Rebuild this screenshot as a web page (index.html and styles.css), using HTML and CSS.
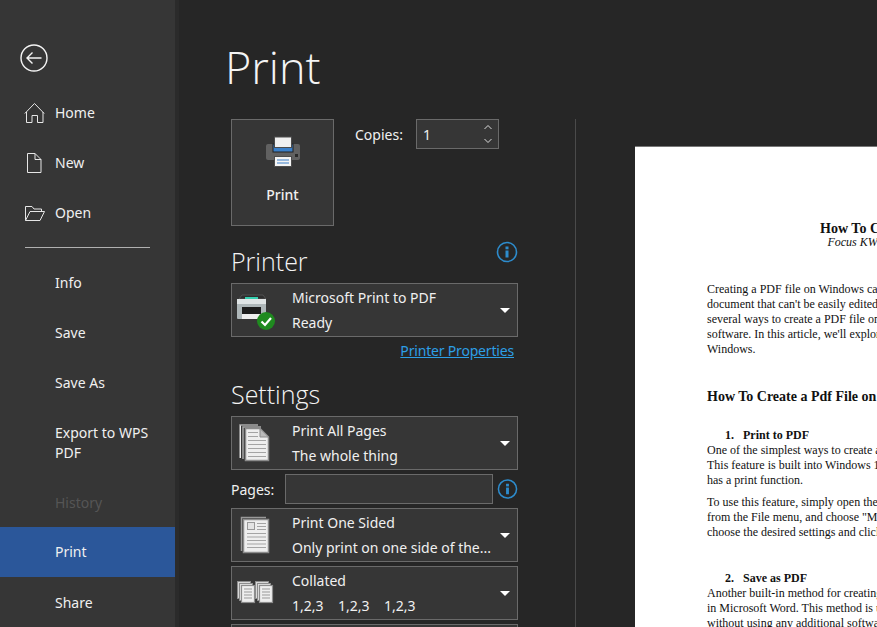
FILE: index.html
```html
<!DOCTYPE html>
<html lang="en">
<head>
<meta charset="utf-8">
<title>Print</title>
<link rel="stylesheet" href="styles.css">
</head>
<body>
<div class="app">
  <nav class="side">
    <div class="back">
      <svg width="28" height="28" viewBox="0 0 28 28" fill="none" stroke="#f4f4f4" stroke-width="1.400"><circle cx="14" cy="14" r="13"/><path d="M21.500 14H7M12.500 8.500 7 14l5.500 5.500"/></svg>
    </div>
    <a class="item"><span class="ico"><svg width="22" height="22" viewBox="0 0 22 22" fill="none" stroke="#e6e6e6" stroke-width="1"><path d="M.8 11.500 10.500 1.500l9.700 10M2.500 10v10.500h5.500v-7h5.500v7H19V10"/></svg></span>Home</a>
    <a class="item"><span class="ico"><svg width="22" height="22" viewBox="0 0 22 22" fill="none" stroke="#e6e6e6" stroke-width="1"><path d="M3.500 1.500v19h13.500V7.500l-6-6zM11 1.500v6h6"/></svg></span>New</a>
    <a class="item"><span class="ico"><svg width="22" height="22" viewBox="0 0 22 22" fill="none" stroke="#e6e6e6" stroke-width="1"><path d="M1.500 18.500V4.500h6.500l2 2.500h7.500v2.500M1.500 18.500h14.500l4.500-9H6z"/></svg></span>Open</a>
    <div class="sep"></div>
    <a class="item">Info</a>
    <a class="item">Save</a>
    <a class="item">Save As</a>
    <a class="item tall">Export to WPS<br>PDF</a>
    <a class="item off">History</a>
    <a class="item on">Print</a>
    <a class="item last">Share</a>
  </nav>
  <main class="main">
    <h1 class="title">Print</h1>
    <div class="cols">
      <section class="panel">
        <div class="top">
          <button class="bigbtn">
            <svg width="36" height="32" viewBox="0 0 36 32"><rect x="1" y="8" width="34" height="16" rx="2" fill="#616161"/><rect x="8" y="8" width="20" height="8" fill="#3a7fc8" stroke="#222" stroke-width="1"/><rect x="9.500" y="1" width="17" height="10.500" fill="#f0f0f0" stroke="#4c4c4c"/><rect x="30" y="18" width="3" height="3" fill="#2a2a2a"/><rect x="9.500" y="20.500" width="17" height="10" fill="#f4f4f4" stroke="#4c4c4c"/><path d="M12 24h12M12 27h12" stroke="#3a7fc8"/></svg>
            <span>Print</span>
          </button>
          <label class="copies">Copies:</label>
          <div class="spin"><span>1</span>
            <svg width="10" height="20" viewBox="0 0 10 20" fill="none" stroke="#dcdcdc"><path d="M1.500 5 5 1.500 8.500 5M1.500 15 5 18.500 8.500 15"/></svg>
          </div>
        </div>
        <div class="headrow">
          <h2>Printer</h2>
          <svg class="info" width="22" height="22" viewBox="0 0 22 22"><circle cx="11" cy="11" r="9.500" fill="none" stroke="#2d8ccd" stroke-width="1.600"/><rect x="9.500" y="9.500" width="3" height="7" fill="#2d8ccd"/><rect x="9.500" y="5.500" width="3" height="2.800" fill="#2d8ccd"/></svg>
        </div>
        <div class="drop">
          <svg class="dico" width="50" height="50" viewBox="0 0 50 50"><path d="M7 14 10 10h21l3 4z" fill="#2e2e2e" stroke="#666" stroke-width=".6"/><rect x="13" y="12" width="13" height="2" fill="#35d0b0"/><rect x="5" y="14" width="29" height="20" rx="1" fill="#aeb7b9"/><rect x="5" y="14" width="29" height="5" fill="#dfe4e5"/><rect x="10" y="22" width="19" height="7" fill="#1d1d1d"/><rect x="10" y="29" width="19" height="5" fill="#eeeeee"/><circle cx="34" cy="36" r="9" fill="#1f8a1f"/><path d="M29.500 36.500 33 40l6-7" fill="none" stroke="#fff" stroke-width="2.200"/></svg>
          <div class="dtxt"><span>Microsoft Print to PDF</span><span>Ready</span></div>
          <i class="arrow"></i>
        </div>
        <a class="link">Printer Properties</a>
        <h2 class="settings">Settings</h2>
        <div class="drop">
          <svg class="dico" width="50" height="50" viewBox="0 0 50 50"><path d="M8 40V7h18M11 41V9h18" fill="none" stroke="#a8a8a8" stroke-width="1.500"/><path d="M8.500 40V7.500" stroke="#eee" stroke-width="1"/><path d="M13.500 10.500H28l8.500 8.500v23.500h-23z" fill="#eee" stroke="#8c8c8c" stroke-width="1.500"/><path d="M28 10.500V19h8.500z" fill="#bbb" stroke="#8c8c8c"/><path d="M16 14.500h10M16 18.500h10M16 22.500h18M16 26.500h18M16 30.500h18M16 34.500h18M16 38.500h18" stroke="#a4a4a4" stroke-width="1.200"/></svg>
          <div class="dtxt"><span>Print All Pages</span><span>The whole thing</span></div>
          <i class="arrow"></i>
        </div>
        <div class="pages">
          <label>Pages:</label>
          <div class="pinput"></div>
          <svg width="22" height="22" viewBox="0 0 22 22"><circle cx="11" cy="11" r="9.500" fill="none" stroke="#2d8ccd" stroke-width="1.600"/><rect x="9.500" y="9.500" width="3" height="7" fill="#2d8ccd"/><rect x="9.500" y="5.500" width="3" height="2.800" fill="#2d8ccd"/></svg>
        </div>
        <div class="drop">
          <svg class="dico" width="50" height="50" viewBox="0 0 50 50"><path d="M9.500 41V7.500H34" fill="none" stroke="#999" stroke-width="1.500"/><rect x="11.500" y="9.500" width="25" height="33" fill="#eee" stroke="#8c8c8c" stroke-width="1.500"/><rect x="15.500" y="12.500" width="7" height="7" fill="#e4e4e4" stroke="#999"/><path d="M25 13.500h9M25 16.500h9M25 19.500h9M15 23.500h19M15 27h19M15 30.500h19M15 34h19M15 37.500h19" stroke="#a4a4a4" stroke-width="1.200"/></svg>
          <div class="dtxt"><span>Print One Sided</span><span>Only print on one side of the...</span></div>
          <i class="arrow"></i>
        </div>
        <div class="drop">
          <svg class="dico" width="50" height="50" viewBox="0 0 50 50"><rect x="5.500" y="13.500" width="13" height="17" fill="#d8d8d8" stroke="#8c8c8c"/><rect x="7.500" y="15.500" width="13" height="17" fill="#e0e0e0" stroke="#8c8c8c"/><rect x="9.500" y="17.500" width="13" height="17" fill="#eee" stroke="#8c8c8c" stroke-width="1.200"/><path d="M12 21h8M12 24h8M12 27h8M12 30h8" stroke="#999"/><rect x="23.500" y="13.500" width="13" height="17" fill="#d8d8d8" stroke="#8c8c8c"/><rect x="25.500" y="15.500" width="13" height="17" fill="#e0e0e0" stroke="#8c8c8c"/><rect x="27.500" y="17.500" width="13" height="17" fill="#eee" stroke="#8c8c8c" stroke-width="1.200"/><path d="M30 21h8M30 24h8M30 27h8M30 30h8" stroke="#999"/></svg>
          <div class="dtxt"><span>Collated</span><span class="nums"><b>1,2,3</b><b>1,2,3</b><b>1,2,3</b></span></div>
          <i class="arrow"></i>
        </div>
        <div class="drop"></div>
      </section>
      <div class="rule"></div>
      <section class="sheet">
        <h3 class="dt">How To Create a Pdf File on Windows 10</h3>
        <p class="kw">Focus KW: how to create a pdf file on windows</p>
        <p class="para intro">Creating a PDF file on Windows can be a useful way to share a<br>document that can't be easily edited or changed. There are<br>several ways to create a PDF file on Windows, with or without<br>software. In this article, we'll explore the options available on<br>Windows.</p>
        <h4 class="dh">How To Create a Pdf File on Windows</h4>
        <h5 class="li"><span>1.</span>Print to PDF</h5>
        <p class="para">One of the simplest ways to create a PDF is the Print to PDF tool.<br>This feature is built into Windows 10 and works in any app that<br>has a print function.</p>
        <p class="para second">To use this feature, simply open the document, select Print<br>from the File menu, and choose "Microsoft Print to PDF", then<br>choose the desired settings and click Print.</p>
        <h5 class="li two"><span>2.</span>Save as PDF</h5>
        <p class="para">Another built-in method for creating a PDF is the Save As option<br>in Microsoft Word. This method is useful for saving documents<br>without using any additional software at all on your computer.</p>
      </section>
    </div>
  </main>
</div>
</body>
</html>
```
FILE: styles.css
```css
* { box-sizing: border-box; }
html, body { margin: 0; height: 100%; overflow: hidden; }
body { background: #262626; color: #f0f0f0; font-family: "Noto Sans", "Open Sans", sans-serif; font-size: 14px; }
.app { display: flex; height: 627px; overflow: hidden; }

.side { width: 175px; flex: none; background: #363636; box-shadow: 4px 0 0 #2b2b2b; }
.back { height: 88px; padding: 44px 0 0 20px; }
.back svg { display: block; }
.item { display: flex; align-items: center; height: 50px; padding: 0 0 2px 55px; position: relative; color: #f0f0f0; }
.item.tall { height: 70px; display: block; padding-top: 15px; line-height: 20px; }
.item.off { color: #555; height: 49px; padding-bottom: 0; }
.item.on { background: #2b579a; }
.item.last { padding-bottom: 0; }
.ico { position: absolute; left: 24px; top: 14px; width: 22px; height: 22px; }
.ico svg { display: block; }
.sep { height: 1px; background: #b0b0b0; margin: 9px 25px 10px; }

.main { flex: 1; min-width: 0; padding-left: 50px; }
.title { margin: 0; height: 119px; padding-top: 37px; font-size: 45px; line-height: 60px; font-weight: 300; color: #f4f4f4; font-family: "Open Sans", sans-serif; }
.cols { display: flex; margin-left: 6px; }
.panel { width: 287px; flex: none; }
.top { display: flex; align-items: flex-start; height: 119px; }
.bigbtn { width: 103px; height: 107px; background: #363636; border: 1px solid #6a6a6a; color: #f0f0f0; font: inherit; display: flex; flex-direction: column; align-items: center; padding: 16px 0 0; }
.bigbtn svg { display: block; margin-bottom: 17px; }
.bigbtn span { font-weight: 500; line-height: 20px; }
.copies { margin: 6px 11px 0 21px; line-height: 20px; width: 50px; }
.spin { width: 83px; height: 30px; background: #363636; border: 1px solid #6a6a6a; display: flex; justify-content: space-between; align-items: center; padding: 0 5px 0 6px; }
h2 { margin: 0; font-size: 25px; font-weight: 300; line-height: 32px; color: #f4f4f4; font-family: "Open Sans", sans-serif; }
.headrow { display: flex; justify-content: space-between; height: 45px; }
.headrow h2 { padding-top: 7px; }
.headrow .info { margin-top: 3px; }
.drop { height: 54px; background: #363636; border: 1px solid #6a6a6a; display: flex; align-items: center; margin-bottom: 4px; padding-right: 7px; }
.dico { flex: none; margin: 0 10px 0 0; display: block; }
.dtxt { flex: 1; min-width: 0; display: flex; flex-direction: column; gap: 5px; line-height: 20px; white-space: nowrap; }
.arrow { width: 0; height: 0; border-left: 5px solid transparent; border-right: 5px solid transparent; border-top: 5px solid #fff; flex: none; }
.nums b { font-weight: 400; display: inline-block; width: 46px; }
.link { display: block; text-align: right; padding-right: 4px; color: #2d9fe6; text-decoration: underline; line-height: 20px; letter-spacing: -.18px; }
.settings { margin-top: 17px; height: 38px; line-height: 32px; }
.pages { display: flex; align-items: center; height: 30px; margin-bottom: 4px; }
.pages label { width: 54px; flex: none; }
.pinput { width: 208px; height: 30px; background: #363636; border: 1px solid #6a6a6a; margin-right: 4px; flex: none; }
.pages svg { display: block; }
.rule { width: 1px; background: #4a4a4a; margin-left: 57px; height: 600px; flex: none; }
.sheet { width: 612px; flex: none; height: 792px; margin: 27px 0 0 59px; background: #fff; border-top: 1px solid #777; color: #111; font-family: "Liberation Serif", serif; font-size: 12px; line-height: 15px; padding: 75px 72px 0; }
.dt { margin: 0; padding-left: 4px; text-align: center; font-size: 14px; line-height: 14px; font-weight: 700; }
.kw { margin: -1px 0 0; text-align: center; font-style: italic; line-height: 14px; }
.para { margin: 0; white-space: nowrap; }
.intro { margin-top: 33px; }
.dh { margin: 32px 0 0; font-size: 14px; line-height: 16px; }
.li { margin: 23px 0 0; font-size: 12px; line-height: 15px; font-weight: 700; padding-left: 18px; }
.li span { display: inline-block; width: 18px; }
.second { margin-top: 7px; }
.li.two { margin-top: 31px; }
```
